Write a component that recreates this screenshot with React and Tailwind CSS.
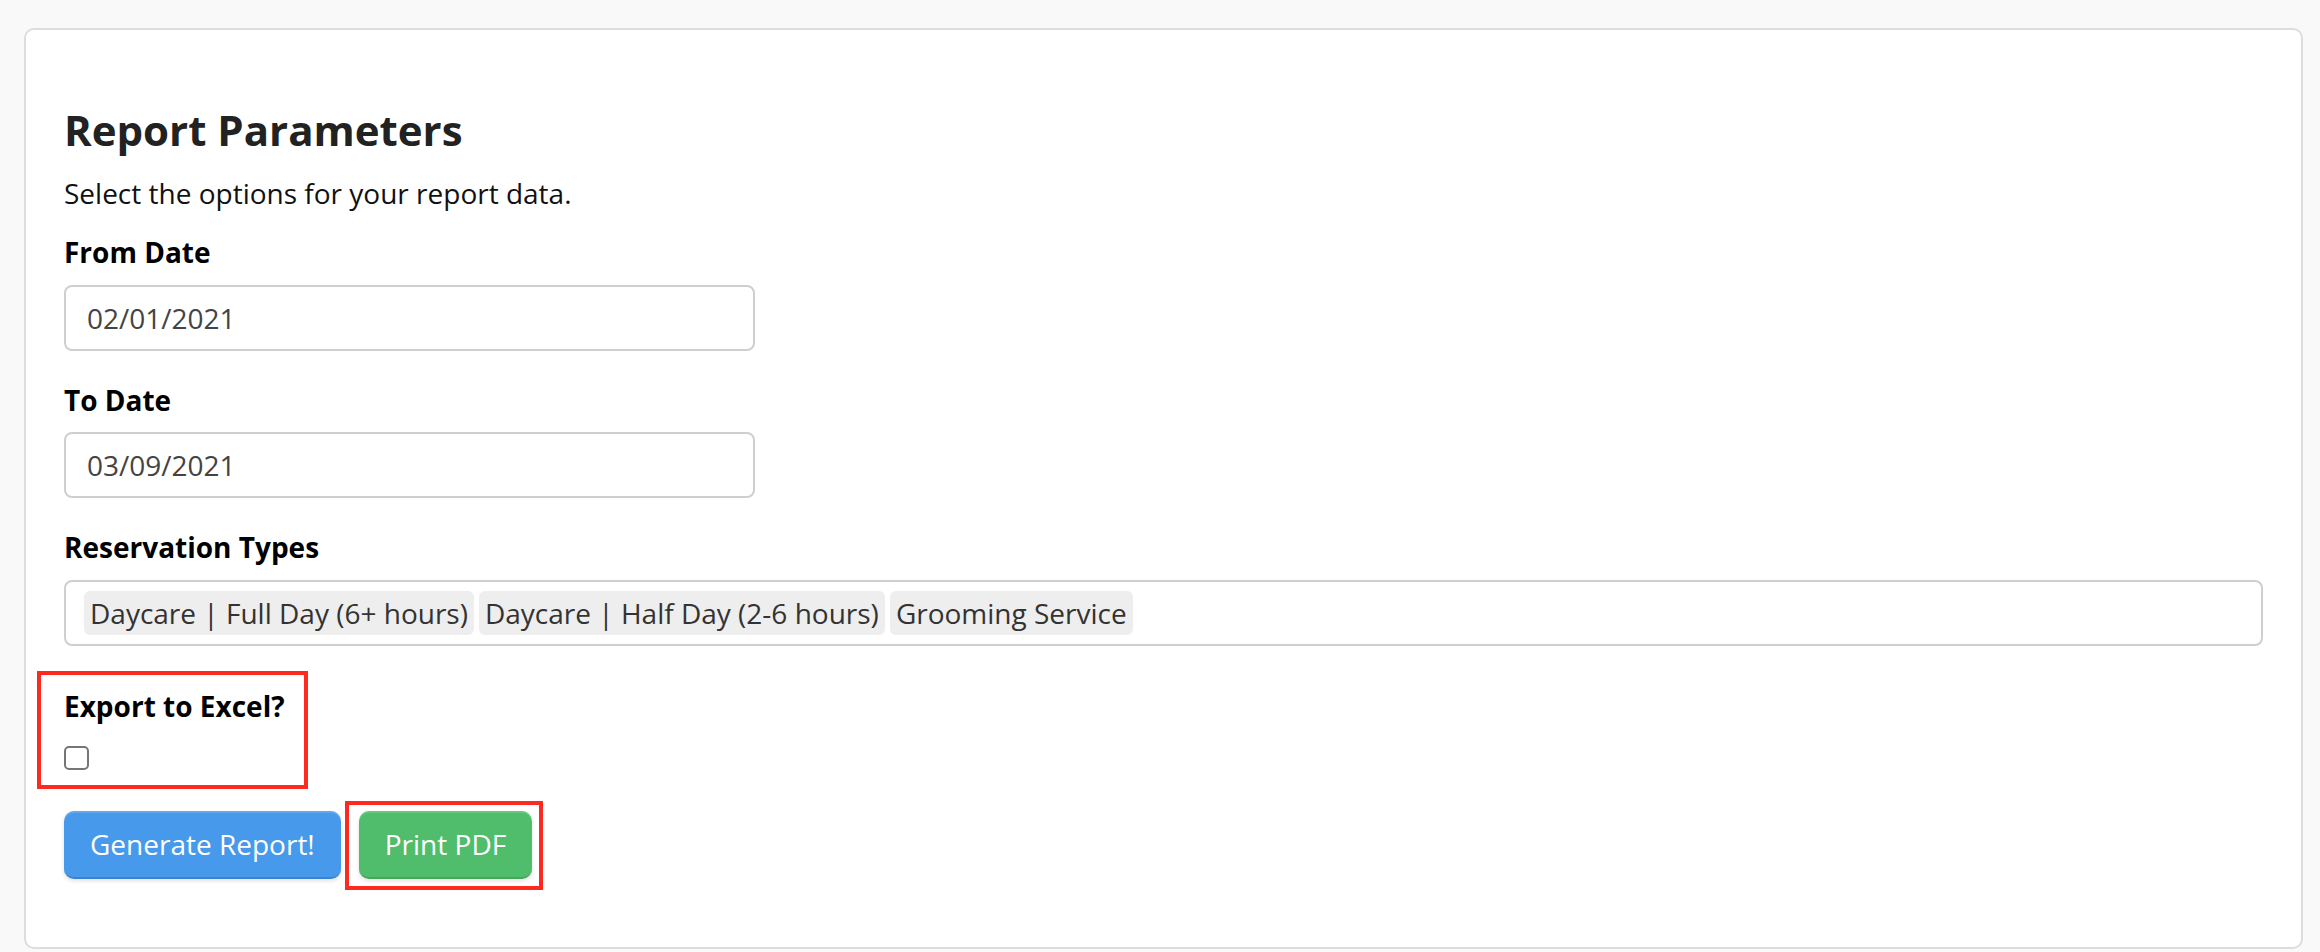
import React from "react";

function Label({ children, className = "" }) {
  return (
    <div className={"text-[28px] leading-[42px] font-bold text-black " + className}>
      {children}
    </div>
  );
}

function DateInput({ value }) {
  return (
    <div className="w-[691px] h-[66px] border-2 border-[#cfcfcf] rounded-[8px] bg-white flex items-center pl-[21px] text-[28px] text-[#444444]">
      {value}
    </div>
  );
}

export default function App() {
  const tags = ["Daycare | Full Day (6+ hours)", "Daycare | Half Day (2-6 hours)", "Grooming Service"];
  return (
    <div className="min-h-[952px] bg-[#f9f9f9] pt-[28px] pl-[24px] pr-[17px] font-['Open_Sans',sans-serif]">
      <div className="border-2 border-[#dddddd] rounded-[10px] bg-white pt-[75px] px-[38px] pb-[68px]">
        <h3 className="text-[42px] leading-[50px] font-bold text-[#222222] mb-[17px]">Report Parameters</h3>
        <p className="text-[28px] leading-[42px] text-[#111111] mb-[17px]">Select the options for your report data.</p>

        <Label className="mb-[12px]">From Date</Label>
        <DateInput value="02/01/2021" />

        <Label className="mt-[28px] mb-[11px]">To Date</Label>
        <DateInput value="03/09/2021" />

        <Label className="mt-[28px] mb-[12px]">Reservation Types</Label>
        <div className="h-[66px] border-2 border-[#cfcfcf] rounded-[8px] bg-white flex items-center pl-[18px] gap-[5px]">
          {tags.map((t) => (
            <span
              key={t}
              className="h-[44px] flex items-center px-[6px] rounded-[6px] bg-[#eeeeee] text-[28px] text-[#333333] whitespace-pre"
            >
              {t}
            </span>
          ))}
        </div>

        <div className="relative mt-[39px]">
          <Label>Export to Excel?</Label>
          <div className="mt-[19px] h-[24px] flex items-center">
            <input
              type="checkbox"
              className="appearance-none w-[25px] h-[24px] border-2 border-[#767676] rounded-[5px] bg-white m-0"
            />
          </div>
          <div className="absolute left-[-27px] top-[-14px] w-[271px] h-[118px] border-[4px] border-[#ff2a1f] pointer-events-none"></div>
        </div>

        <div className="mt-[41px] flex gap-[18px]">
          <button className="h-[68px] px-[26px] rounded-[10px] bg-[#4799eb] border-b-2 border-[#3b84d2] shadow-[inset_0_2px_0_rgba(255,255,255,0.15),0_2px_4px_rgba(0,0,0,0.12)] text-white text-[28px] leading-[42px]">
            Generate Report!
          </button>
          <div className="relative">
            <button className="h-[68px] px-[26px] rounded-[10px] bg-[#4fbd6b] border-b-2 border-[#45a65e] shadow-[inset_0_2px_0_rgba(255,255,255,0.15),0_2px_4px_rgba(0,0,0,0.12)] text-white text-[28px] leading-[42px]">
              Print PDF
            </button>
            <div className="absolute left-[-14px] top-[-10px] w-[198px] h-[89px] border-[4px] border-[#ff2a1f] pointer-events-none"></div>
          </div>
        </div>
      </div>
    </div>
  );
}
